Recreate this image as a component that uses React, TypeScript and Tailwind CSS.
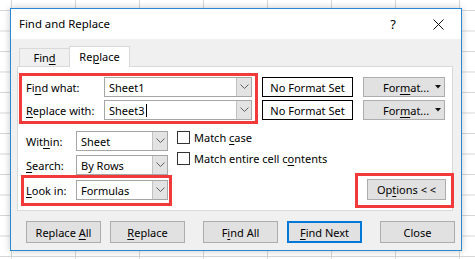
import React from 'react'

const font = "font-['Noto_Sans','Open_Sans',sans-serif]"

function Chevron() {
  return (
    <svg width="9" height="6" viewBox="0 0 9 6" className="block">
      <polyline points="0.5,0.5 4.5,4.5 8.5,0.5" fill="none" stroke="#606060" strokeWidth="1" />
    </svg>
  )
}

function Combo({ value, cursor, width }: { value: string; cursor?: boolean; width: string }) {
  return (
    <div className={`flex h-[20px] ${width} items-stretch border border-[#a6a6a6] bg-white`}>
      <div className="flex flex-1 items-center pl-[4px] text-[11px] leading-none text-black">
        {value}
        {cursor ? <span className="ml-px inline-block h-[13px] w-px bg-black" /> : null}
      </div>
      <div className="flex w-[15px] items-center justify-center border-l border-[#c2c2c2] bg-[#e3e3e3]">
        <Chevron />
      </div>
    </div>
  )
}

function Label({ pre, u, post, width }: { pre: string; u: string; post: string; width: string }) {
  return (
    <div className={`${width} shrink-0 text-[11px] leading-none text-black`}>
      {pre}
      <u className="underline-offset-[2px]">{u}</u>
      {post}
    </div>
  )
}

function Button({ children, className = '', primary }: { children: React.ReactNode; className?: string; primary?: boolean }) {
  return (
    <div
      className={`flex h-[22px] w-[75px] items-center justify-center bg-[#e1e1e1] text-[11px] leading-none text-black ${
        primary ? 'border-2 border-[#0078d7]' : 'border border-[#adadad]'
      } ${className}`}
    >
      {children}
    </div>
  )
}

function FormatButton() {
  return (
    <div className="flex h-[20px] w-[82px] items-center border border-[#adadad] bg-[#e1e1e1] pl-[19px] text-[11px] leading-none text-black">
      <span>
        For<u className="underline-offset-[2px]">m</u>at...
      </span>
      <svg width="6" height="4" viewBox="0 0 6 4" className="ml-auto mr-[3px]">
        <polygon points="0,0 6,0 3,3.5" fill="#111" />
      </svg>
    </div>
  )
}

function Checkbox({ children }: { children: React.ReactNode }) {
  return (
    <div className="flex h-[13px] items-center">
      <span className="h-[13px] w-[13px] shrink-0 border border-[#333] bg-white" />
      <span className="ml-[4px] text-[11px] leading-none text-black">{children}</span>
    </div>
  )
}

export default function App() {
  return (
    <div
      className={`relative h-[259px] w-[475px] overflow-hidden bg-white bg-[linear-gradient(to_right,#d6d6d6_1px,transparent_1px),linear-gradient(to_bottom,#d6d6d6_1px,transparent_1px)] bg-[size:64px_20.5px] bg-[position:11px_10px] ${font}`}
    >
      <div className="absolute left-[10px] top-[8px] flex h-[243px] w-[452px] flex-col border border-[#2a86d6] bg-[#f0f0f0] shadow-[0_0_7px_rgba(0,0,0,0.22)]">
        {/* title bar */}
        <div className="flex h-[30px] items-center bg-white">
          <span className="pl-[8px] text-[11.4px] leading-none text-black">Find and Replace</span>
          <span className="ml-auto mr-[7px] flex w-[30px] justify-center text-[13px] leading-none text-black">?</span>
          <span className="flex w-[46px] justify-center">
            <svg width="11" height="11" viewBox="0 0 11 11">
              <path d="M0.5 0.5L10.5 10.5M10.5 0.5L0.5 10.5" stroke="#111" strokeWidth="1" />
            </svg>
          </span>
        </div>

        {/* tabs */}
        <div className="mt-[7px] flex h-[20px] items-end pl-[8px]">
          <div className="flex h-[18px] w-[50px] items-center justify-center border-l border-t border-[#d9d9d9] bg-[#f0f0f0] text-[11px] leading-none text-black">
            <span>
              Fin<u className="underline-offset-[2px]">d</u>
            </span>
          </div>
          <div className="relative z-10 -mb-px flex h-[21px] w-[61px] items-center justify-center border-x border-t border-[#d9d9d9] bg-white pb-[2px] text-[11px] leading-none text-black">
            <span>
              Re<u className="underline-offset-[2px]">p</u>lace
            </span>
          </div>
        </div>

        {/* panel */}
        <div className="ml-[6px] mr-[8px] flex h-[145px] flex-col border border-[#d9d9d9] bg-white">
          <div className="ml-px mt-[6px] flex">
            <div className="flex w-[239px] flex-col gap-[3px] border-[3px] border-[#f23a3a] pb-px pl-[4px] pt-px">
              <div className="flex items-center">
                <Label pre="Fi" u="n" post="d what:" width="w-[78px]" />
                <Combo value="Sheet1" width="w-[148px]" />
              </div>
              <div className="flex items-center">
                <Label pre="" u="R" post="eplace with:" width="w-[78px]" />
                <Combo value="Sheet3" cursor width="w-[148px]" />
              </div>
            </div>
            <div className="ml-[4px] flex flex-col gap-[3px] pt-[4px]">
              {[0, 1].map((i) => (
                <div key={i} className="flex">
                  <div className="flex h-[20px] w-[91px] items-center justify-center border border-black bg-white text-[11px] leading-none text-black">
                    No Format Set
                  </div>
                  <div className="ml-[10px]">
                    <FormatButton />
                  </div>
                </div>
              ))}
            </div>
          </div>

          <div className="mt-[7px] flex items-start">
            <div className="ml-[3px] flex w-[151px] flex-col">
              <div className="flex h-[20px] items-center pl-[5px]">
                <Label pre="Wit" u="h" post="in:" width="w-[50px]" />
                <Combo value="Sheet" width="w-[92px]" />
              </div>
              <div className="mt-[4px] flex h-[20px] items-center pl-[5px]">
                <Label pre="" u="S" post="earch:" width="w-[50px]" />
                <Combo value="By Rows" width="w-[92px]" />
              </div>
              <div className="flex items-center border-[3px] border-[#f23a3a] pb-[3px] pl-[2px] pt-[2px]">
                <Label pre="" u="L" post="ook in:" width="w-[50px]" />
                <Combo value="Formulas" width="w-[92px]" />
              </div>
            </div>

            <div className="ml-[5px] flex flex-col gap-[8px]">
              <Checkbox>
                Match <u className="underline-offset-[2px]">c</u>ase
              </Checkbox>
              <Checkbox>
                Match entire cell c<u className="underline-offset-[2px]">o</u>ntents
              </Checkbox>
            </div>

            <div className="-mr-[2px] ml-auto mt-[42px] h-[35px] w-[99px] border-[3px] border-[#f23a3a] pl-[9px] pt-[3px]">
              <div className="flex h-[21px] w-[79px] items-center justify-center border border-[#adadad] bg-[#e1e1e1] text-[11px] leading-none text-black">
                <span>
                  Op<u className="underline-offset-[2px]">t</u>ions &lt; &lt;
                </span>
              </div>
            </div>
          </div>
        </div>

        {/* bottom buttons */}
        <div className="mt-[10px] flex">
          <Button className="ml-[15px]">
            <span>
              Replace <u className="underline-offset-[2px]">A</u>ll
            </span>
          </Button>
          <Button className="ml-[9px]">
            <span>
              <u className="underline-offset-[2px]">R</u>eplace
            </span>
          </Button>
          <Button className="ml-[18px]">
            <span>
              F<u className="underline-offset-[2px]">i</u>nd All
            </span>
          </Button>
          <Button primary className="ml-[9px]">
            <span>
              <u className="underline-offset-[2px]">F</u>ind Next
            </span>
          </Button>
          <Button className="ml-[18px]">Close</Button>
        </div>
      </div>
    </div>
  )
}
